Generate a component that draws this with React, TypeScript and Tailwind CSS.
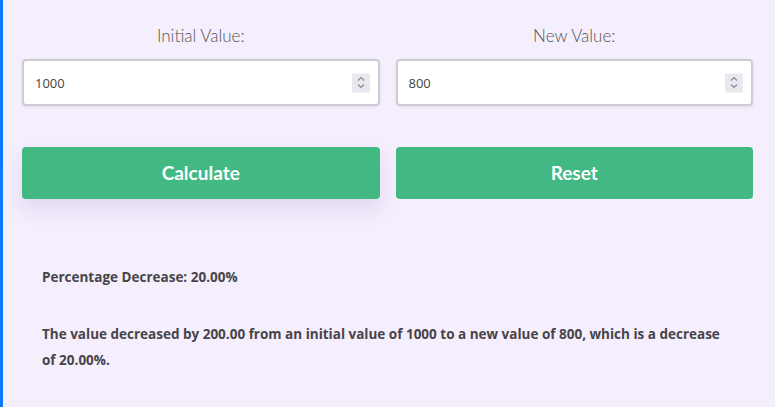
import { useState } from "react";

function Spinner() {
  return (
    <div className="pointer-events-none absolute right-[10px] top-1/2 -translate-y-1/2 flex h-[19px] w-[18px] flex-col items-center justify-center bg-[#e9e8ee]">
      <svg width="8" height="14" viewBox="0 0 8 14" fill="none" stroke="#8a8a90" strokeWidth="1.2">
        <path d="M1 5 L4 2 L7 5" />
        <path d="M1 9 L4 12 L7 9" />
      </svg>
    </div>
  );
}

function NumberField({ label, value, onChange }: { label: string; value: string; onChange: (v: string) => void }) {
  return (
    <div className="flex flex-col">
      <label className="text-center text-[17px] font-light text-[#555] leading-none pt-[27px] pb-[15px]">{label}</label>
      <div className="relative">
        <input
          type="number"
          value={value}
          onChange={(e) => onChange(e.target.value)}
          className="w-full h-[47px] bg-white border-2 border-[#cdcbd3] rounded-[4px] pl-[11px] pr-8 text-[13px] text-[#444] outline-none shadow-[0_1px_3px_rgba(0,0,0,0.08)] [appearance:textfield] [&::-webkit-inner-spin-button]:appearance-none [&::-webkit-outer-spin-button]:appearance-none"
          style={{ fontFamily: "'Open Sans', sans-serif" }}
        />
        <Spinner />
      </div>
    </div>
  );
}

export default function App() {
  const [initial, setInitial] = useState("1000");
  const [next, setNext] = useState("800");

  const a = parseFloat(initial);
  const b = parseFloat(next);
  const diff = a - b;
  const pct = (diff / a) * 100;

  return (
    <div
      className="min-h-[407px] bg-[#f4eefd] border-l-[3px] border-[#0a7bff] pl-[19px] pr-[22px]"
      style={{ fontFamily: "Lato, 'Open Sans', sans-serif" }}
    >
      <div className="grid grid-cols-2 gap-4">
        <NumberField label="Initial Value:" value={initial} onChange={setInitial} />
        <NumberField label="New Value:" value={next} onChange={setNext} />
      </div>
      <div className="grid grid-cols-2 gap-4 mt-[41px]">
        <button
          type="button"
          className="h-[52px] rounded-[4px] bg-[#42b883] text-white text-[19px] font-bold shadow-[0_10px_20px_rgba(120,90,170,0.15)]"
        >
          Calculate
        </button>
        <button
          type="button"
          onClick={() => {
            setInitial("");
            setNext("");
          }}
          className="h-[52px] rounded-[4px] bg-[#42b883] text-white text-[19px] font-bold"
        >
          Reset
        </button>
      </div>
      <div
        className="px-5 pt-[69px] text-[13.5px] font-bold text-[#474449]"
        style={{ fontFamily: "'Open Sans', sans-serif" }}
      >
        <p className="leading-[18px]">Percentage Decrease: {isFinite(pct) ? pct.toFixed(2) : "0.00"}%</p>
        <p className="leading-[26px] mt-[35px]">
          The value decreased by {isFinite(diff) ? diff.toFixed(2) : "0.00"} from an initial value of {initial} to a new
          value of {next}, which is a decrease of {isFinite(pct) ? pct.toFixed(2) : "0.00"}%.
        </p>
      </div>
    </div>
  );
}
